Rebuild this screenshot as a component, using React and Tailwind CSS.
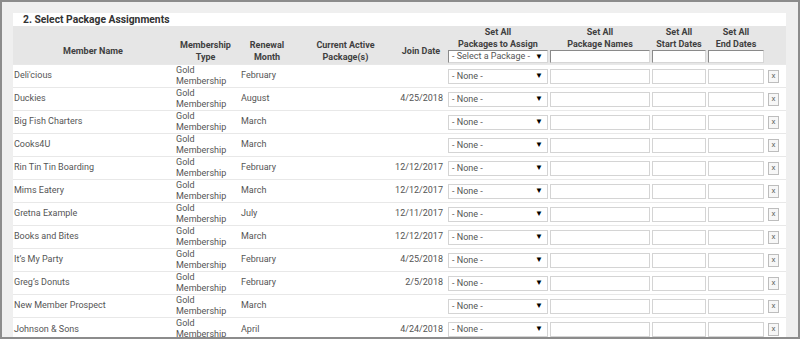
import React from "react";

const rows = [
  ["Deli'cious", "February", ""],
  ["Duckies", "August", "4/25/2018"],
  ["Big Fish Charters", "March", ""],
  ["Cooks4U", "March", ""],
  ["Rin Tin Tin Boarding", "February", "12/12/2017"],
  ["Mims Eatery", "March", "12/12/2017"],
  ["Gretna Example", "July", "12/11/2017"],
  ["Books and Bites", "March", "12/12/2017"],
  ["It\u2019s My Party", "February", "4/25/2018"],
  ["Greg\u2019s Donuts", "February", "2/5/2018"],
  ["New Member Prospect", "March", ""],
  ["Johnson & Sons", "April", "4/24/2018"],
];

function Select({ label, header }) {
  return (
    <div
      className={
        header
          ? "flex h-[13px] w-full items-center justify-between border border-t-[#8a8a8a] border-l-[#8a8a8a] border-r-[#d6d6d6] border-b-[#d6d6d6] bg-white pl-[3px] pr-[4px]"
          : "flex h-[15px] w-full items-center justify-between border border-[#d4d4d4] bg-white pl-[3px] pr-[4px]"
      }
    >
      <span className="leading-none text-[#555]">{label}</span>
      <span className="text-[8px] leading-none text-black">▼</span>
    </div>
  );
}

function Input({ header }) {
  return (
    <div
      className={
        header
          ? "h-[13px] w-full border border-t-[#8a8a8a] border-l-[#8a8a8a] border-r-[#d6d6d6] border-b-[#d6d6d6] bg-white"
          : "h-[15px] w-full border border-[#d4d4d4] bg-white"
      }
    />
  );
}

export default function App() {
  return (
    <div
      className="h-[339px] w-[800px] overflow-hidden border-2 border-[#8c8c8c] bg-[#efefef] pl-[11px] pr-[12px] pt-[11px]"
      style={{ fontFamily: "Roboto, 'Liberation Sans', sans-serif" }}
    >
      <div className="bg-white">
        <div className="h-[13px] pl-[10px] text-[10.3px] font-bold leading-[13px] text-[#333]">
          2. Select Package Assignments
        </div>
        <table className="w-[773px] table-fixed border-collapse text-[9px] text-[#555]">
          <colgroup>
            <col className="w-[160px]" />
            <col className="w-[65px]" />
            <col className="w-[58px]" />
            <col className="w-[99px]" />
            <col className="w-[52px]" />
            <col className="w-[102px]" />
            <col className="w-[102px]" />
            <col className="w-[56px]" />
            <col className="w-[58px]" />
            <col className="w-[21px]" />
          </colgroup>
          <thead>
            <tr className="h-[38px] bg-[#e6e6e6] text-center font-bold text-[#3f3f3f]">
              <th className="pt-[12px] align-middle leading-[12px]">Member Name</th>
              <th className="pt-[12px] align-middle leading-[12px]">
                Membership
                <br />
                Type
              </th>
              <th className="pt-[12px] align-middle leading-[12px]">
                Renewal
                <br />
                Month
              </th>
              <th className="pt-[12px] align-middle leading-[12px]">
                Current Active
                <br />
                Package(s)
              </th>
              <th className="pt-[12px] align-middle leading-[12px]">Join Date</th>
              <th className="px-[1px] pb-[1px] align-bottom leading-[12px]">
                Set All
                <br />
                Packages to Assign
                <div className="font-normal">
                  <Select label="- Select a Package -" header />
                </div>
              </th>
              <th className="px-[1px] pb-[1px] align-bottom leading-[12px]">
                Set All
                <br />
                Package Names
                <Input header />
              </th>
              <th className="px-[1px] pb-[1px] align-bottom leading-[12px]">
                Set All
                <br />
                Start Dates
                <Input header />
              </th>
              <th className="px-[1px] pb-[1px] align-bottom leading-[12px]">
                Set All
                <br />
                End Dates
                <Input header />
              </th>
              <th />
            </tr>
          </thead>
          <tbody>
            {rows.map(([name, month, join], i) => (
              <tr key={i} className="h-[23px] border-t border-[#e8e8e8]">
                <td className="pl-[1px] align-middle">{name}</td>
                <td className="pl-[3px] align-middle leading-[11px]">
                  Gold
                  <br />
                  Membership
                </td>
                <td className="pl-[3px] align-middle">{month}</td>
                <td />
                <td className="pr-[4px] text-right align-middle">{join}</td>
                <td className="px-[1px] align-middle">
                  <Select label="- None -" />
                </td>
                <td className="px-[1px] align-middle">
                  <Input />
                </td>
                <td className="px-[1px] align-middle">
                  <Input />
                </td>
                <td className="px-[1px] align-middle">
                  <Input />
                </td>
                <td className="pl-[3px] align-middle">
                  <div className="flex h-[13px] w-[11px] items-center justify-center border border-[#bdbdbd] bg-[#f7f7f7] text-[8px] leading-none text-[#666]">
                    x
                  </div>
                </td>
              </tr>
            ))}
          </tbody>
        </table>
      </div>
    </div>
  );
}
